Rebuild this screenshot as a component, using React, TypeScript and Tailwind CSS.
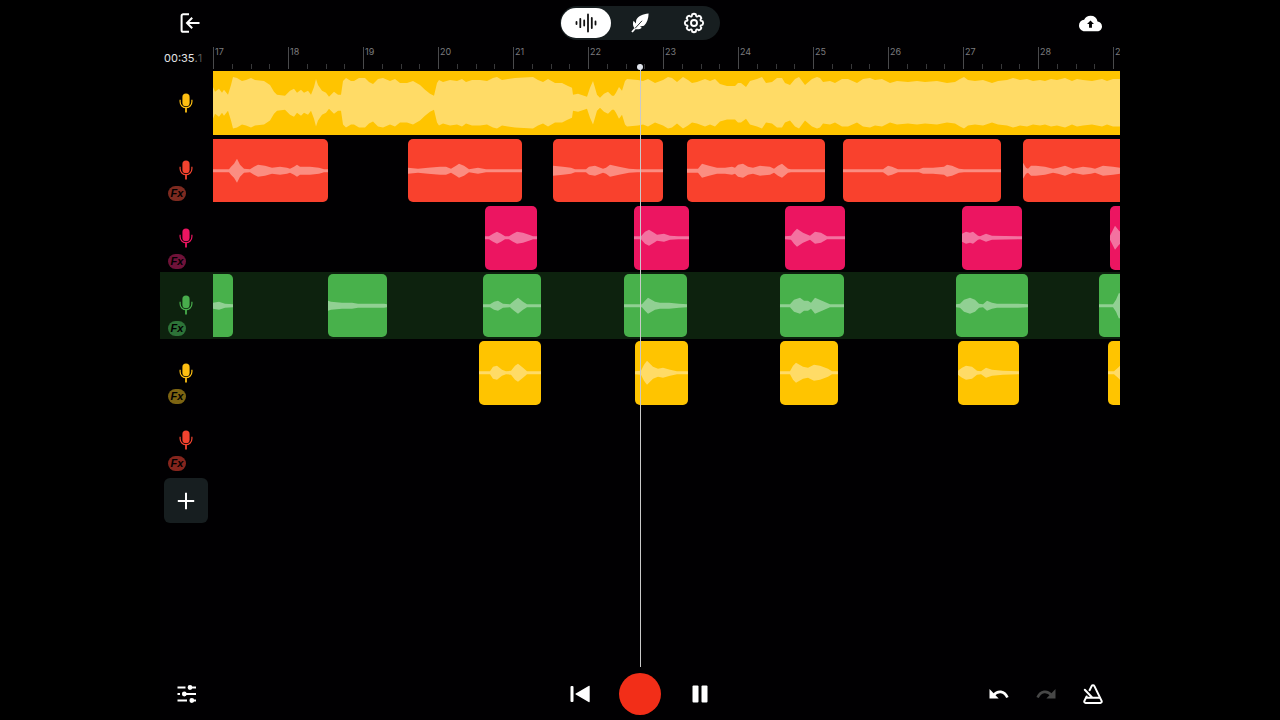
import { ReactNode } from "react";
import { clsx } from "clsx";

type Point = [number, number];

interface ClipData {
  start: number;
  end: number;
  wave: Point[];
}

interface TrackData {
  name: string;
  clip: string;
  mic: string;
  fx?: string;
  selected?: boolean;
  full?: boolean;
  clips: ClipData[];
}

const BARS = [17, 18, 19, 20, 21, 22, 23, 24, 25, 26, 27, 28, 29];

const MASTER_WAVE: Point[] = [
  [0, 16], [2, 11], [6, 14], [9, 10], [11, 13], [15, 8], [18, 18], [20, 26], [24, 25], [29, 22],
  [33, 23], [38, 25], [42, 23], [51, 22], [57, 18], [61, 11], [64, 8], [72, 7], [77, 12], [81, 14],
  [84, 10], [88, 13], [91, 10], [95, 12], [98, 8], [101, 16], [103, 24], [105, 18], [109, 12], [113, 10],
  [116, 6], [121, 11], [125, 8], [128, 8], [130, 22], [133, 25], [138, 22], [141, 22], [146, 25], [152, 25],
  [156, 21], [160, 19], [165, 24], [170, 25], [177, 22], [182, 24], [187, 20], [194, 20], [200, 22], [207, 18],
  [212, 13], [217, 9], [221, 7], [224, 20], [226, 23], [230, 21], [237, 23], [244, 22], [249, 24], [253, 21],
  [259, 23], [267, 23], [274, 22], [280, 25], [284, 26], [289, 23], [295, 24], [302, 25], [320, 26], [325, 23],
  [330, 21], [335, 24], [342, 20], [349, 20], [355, 17], [359, 15], [360, 8], [365, 9], [374, 6], [377, 15],
  [380, 22], [382, 15], [384, 8], [387, 5], [391, 9], [395, 11], [399, 7], [401, 7], [403, 10], [406, 16],
  [409, 12], [412, 22], [414, 24], [425, 23], [430, 22], [435, 24], [442, 20], [450, 23], [455, 26], [459, 25],
  [464, 21], [470, 26], [475, 23], [479, 20], [484, 21], [492, 24], [497, 22], [502, 24], [507, 19], [514, 17],
  [522, 17], [525, 20], [528, 20], [533, 16], [537, 22], [544, 24], [549, 26], [553, 20], [559, 21], [564, 25],
  [569, 25], [572, 20], [577, 18], [582, 24], [586, 26], [592, 18], [599, 24], [604, 26], [607, 25], [610, 21],
  [617, 22], [622, 20], [629, 24], [635, 24], [644, 20], [650, 24], [657, 25], [662, 23], [669, 24], [677, 20],
  [684, 22], [695, 21], [704, 22], [712, 21], [724, 22], [734, 20], [742, 21], [747, 24], [751, 26], [755, 23],
  [762, 22], [770, 23], [779, 20], [785, 22], [794, 23], [800, 25], [807, 23], [814, 24], [820, 22], [827, 23],
  [832, 22], [838, 24], [844, 23], [852, 25], [859, 22], [864, 24], [870, 23], [879, 22], [884, 23], [889, 24],
  [894, 22], [900, 24], [907, 24], [914, 24],
];

const TRACKS: TrackData[] = [
  {
    name: "Track 1",
    clip: "bg-[#ffc400]",
    mic: "text-[#fdbe12]",
    full: true,
    clips: [{ start: 0, end: 914, wave: MASTER_WAVE }],
  },
  {
    name: "Track 2",
    clip: "bg-[#f9412d]",
    mic: "text-[#f4432f]",
    fx: "bg-[#7d2a20]",
    clips: [
      { start: 0, end: 115, wave: [[0, 1], [16, 1], [18, 4], [21, 7], [24, 12], [27, 6], [31, 2], [37, 1], [41, 4], [45, 6], [52, 5], [59, 3], [67, 4], [74, 3], [77, 2], [81, 4], [84, 6], [87, 4], [97, 4], [106, 3], [111, 1], [115, 1]] },
      { start: 195, end: 309, wave: [[0, 3], [10, 2], [20, 3], [32, 4], [38, 4], [43, 2], [48, 5], [51, 7], [56, 5], [61, 1], [70, 3], [78, 1], [114, 1]] },
      { start: 340, end: 450, wave: [[0, 5], [10, 4], [18, 3], [22, 1], [33, 1], [36, 4], [42, 5], [50, 2], [53, 3], [57, 6], [66, 4], [76, 2], [84, 1], [110, 1]] },
      { start: 474, end: 612, wave: [[0, 2], [11, 2], [15, 7], [22, 5], [30, 3], [38, 3], [45, 4], [48, 3], [51, 6], [56, 7], [61, 4], [66, 3], [73, 5], [83, 4], [87, 2], [91, 5], [95, 7], [101, 2], [104, 1], [138, 1]] },
      { start: 630, end: 788, wave: [[0, 1], [40, 1], [45, 5], [49, 4], [55, 1], [76, 1], [80, 3], [90, 3], [101, 4], [104, 6], [109, 5], [116, 2], [121, 1], [158, 1]] },
      { start: 810, end: 930, wave: [[0, 8], [3, 3], [5, 2], [8, 5], [13, 5], [22, 4], [30, 2], [35, 3], [42, 5], [50, 2], [60, 4], [68, 3], [72, 2], [80, 5], [90, 4], [97, 3], [120, 2]] },
    ],
  },
  {
    name: "Track 3",
    clip: "bg-[#ec1561]",
    mic: "text-[#ec1561]",
    fx: "bg-[#6f1239]",
    clips: [
      { start: 272, end: 324, wave: [[0, 1], [4, 1], [8, 4], [12, 6], [16, 4], [20, 1], [24, 1], [28, 4], [32, 6], [38, 5], [44, 3], [48, 1], [52, 1]] },
      { start: 421, end: 476, wave: [[0, 1], [7, 1], [11, 6], [15, 8], [20, 5], [23, 3], [30, 4], [36, 2], [44, 1], [55, 1]] },
      { start: 572, end: 632, wave: [[0, 1], [6, 2], [9, 6], [12, 9], [18, 5], [25, 2], [30, 6], [36, 5], [42, 1], [60, 1]] },
      { start: 749, end: 809, wave: [[0, 4], [4, 6], [8, 5], [11, 6], [16, 2], [18, 1], [24, 4], [30, 2], [60, 1]] },
      { start: 897, end: 950, wave: [[0, 2], [3, 8], [5, 12], [9, 7], [14, 3], [20, 1], [53, 1]] },
    ],
  },
  {
    name: "Track 4",
    clip: "bg-[#48b14b]",
    mic: "text-[#48ad4c]",
    fx: "bg-[#2d7338]",
    selected: true,
    clips: [
      { start: 0, end: 20, wave: [[0, 3], [6, 4], [12, 2], [20, 1]] },
      { start: 115, end: 174, wave: [[0, 5], [3, 4], [14, 3], [24, 3], [30, 2], [56, 2], [59, 1]] },
      { start: 270, end: 328, wave: [[0, 1], [7, 1], [11, 4], [15, 5], [20, 2], [27, 1], [31, 5], [35, 8], [40, 4], [44, 1], [58, 1]] },
      { start: 411, end: 474, wave: [[0, 1], [18, 1], [21, 5], [24, 8], [31, 4], [36, 3], [45, 3], [55, 2], [63, 1]] },
      { start: 567, end: 631, wave: [[0, 1], [10, 1], [14, 6], [20, 8], [24, 5], [28, 5], [31, 3], [35, 8], [42, 5], [50, 1], [64, 1]] },
      { start: 743, end: 815, wave: [[0, 1], [4, 2], [8, 6], [14, 8], [19, 6], [23, 2], [27, 1], [31, 5], [36, 3], [41, 2], [62, 2], [72, 1]] },
      { start: 886, end: 950, wave: [[0, 1], [14, 1], [17, 6], [20, 13], [26, 8], [32, 2], [64, 1]] },
    ],
  },
  {
    name: "Track 5",
    clip: "bg-[#ffc400]",
    mic: "text-[#fdbe12]",
    fx: "bg-[#7d6412]",
    clips: [
      { start: 266, end: 328, wave: [[0, 1], [11, 1], [14, 6], [18, 7], [23, 3], [27, 1], [32, 2], [36, 7], [39, 9], [44, 5], [48, 1], [62, 1]] },
      { start: 422, end: 475, wave: [[0, 1], [6, 2], [9, 8], [12, 12], [18, 6], [23, 4], [28, 5], [35, 3], [42, 1], [53, 1]] },
      { start: 567, end: 625, wave: [[0, 1], [10, 1], [13, 7], [16, 10], [23, 6], [28, 5], [34, 8], [40, 7], [48, 4], [52, 1], [58, 1]] },
      { start: 745, end: 806, wave: [[0, 2], [4, 5], [8, 7], [14, 6], [19, 2], [23, 1], [28, 5], [34, 3], [45, 2], [61, 1]] },
      { start: 895, end: 950, wave: [[0, 1], [6, 1], [10, 5], [13, 8], [20, 5], [30, 1], [55, 1]] },
    ],
  },
  {
    name: "Track 6",
    clip: "bg-[#f9412d]",
    mic: "text-[#f4432f]",
    fx: "bg-[#85251d]",
    clips: [],
  },
];

// Mirrors the amplitude list around the middle of the clip
function wavePath(wave: Point[]) {
  const thick = (amp: number) => Math.max(amp, 1.4);
  const top = wave.map(([x, amp]) => `${x} ${32 - thick(amp)}`);
  const bottom = [...wave].reverse().map(([x, amp]) => `${x} ${32 + thick(amp)}`);
  return `M${[...top, ...bottom].join("L")}Z`;
}

function gearPath() {
  const at = (deg: number, r: number) => {
    const a = (deg * Math.PI) / 180;
    return `${(11 + r * Math.cos(a)).toFixed(2)} ${(11 + r * Math.sin(a)).toFixed(2)}`;
  };
  let d = `M${at(-12, 8.8)}`;
  for (let i = 0; i < 8; i++) {
    const a = i * 45;
    d += `Q${at(a, 9.8)} ${at(a + 12, 8.8)}Q${at(a + 22.5, 5.4)} ${at(a + 33, 8.8)}`;
  }
  return d + "Z";
}

function IconButton({ label, className, children }: { label: string; className?: string; children: ReactNode }) {
  return (
    <button type="button" aria-label={label} className={clsx("flex h-10 w-10 items-center justify-center", className)}>
      {children}
    </button>
  );
}

function MicIcon() {
  return (
    <svg width="14" height="20" viewBox="0 0 14 20" fill="none">
      <rect x="3.4" y="0.5" width="7.2" height="12.8" rx="3.6" fill="currentColor" />
      <path d="M1.1 6.8v2a5.9 5.9 0 0 0 11.8 0v-2" stroke="currentColor" strokeWidth="1.2" />
      <path d="M7 14.6v5" stroke="currentColor" strokeWidth="1.8" />
    </svg>
  );
}

function Clip({ clip, offset, track }: { clip: ClipData; offset: number; track: TrackData }) {
  const width = clip.end - clip.start;
  return (
    <div
      className={clsx(
        "h-full shrink-0 overflow-hidden",
        track.clip,
        !track.full && (clip.start === 0 ? "rounded-r-[5px]" : "rounded-[5px]")
      )}
      style={{ width, marginLeft: offset }}
    >
      <svg className="h-full w-full" viewBox={`0 0 ${width} 64`} preserveAspectRatio="none">
        <path d={wavePath(clip.wave)} fill="#fff" fillOpacity="0.4" strokeLinejoin="round" />
      </svg>
    </div>
  );
}

function Track({ track }: { track: TrackData }) {
  return (
    <li className={clsx("flex min-h-0 flex-1", track.selected && "bg-[#0d220e]")}>
      <div className={clsx("relative flex w-[53px] shrink-0 items-center justify-center pr-px", track.mic)}>
        <button type="button" aria-label={track.name}>
          <MicIcon />
        </button>
        {track.fx && (
          <span
            className={clsx(
              "absolute bottom-[3px] left-2 flex h-[15px] w-[18px] items-center justify-center rounded-full font-['Liberation_Sans'] text-[11px] font-bold italic leading-none text-black",
              track.fx
            )}
          >
            Fx
          </span>
        )}
      </div>
      <div className="flex min-w-0 flex-1 overflow-hidden py-0.5">
        {track.clips.map((clip, i) => (
          <Clip
            key={clip.start}
            clip={clip}
            track={track}
            offset={clip.start - (i > 0 ? track.clips[i - 1].end : 0)}
          />
        ))}
      </div>
    </li>
  );
}

function Header() {
  return (
    <header className="grid h-[46px] grid-cols-[1fr_auto_1fr] items-center px-2.5">
      <IconButton label="Exit">
        <svg width="20" height="20" viewBox="0 0 20 20" fill="none" stroke="#fff" strokeWidth="2">
          <path d="M9 1.2H3.2a1.6 1.6 0 0 0-1.6 1.6v14.4a1.6 1.6 0 0 0 1.6 1.6H9" />
          <path d="M19.5 10H7.2M12.2 4.8 7 10l5.2 5.2" />
        </svg>
      </IconButton>
      <nav className="flex h-[34px] items-center gap-1 rounded-full bg-[#171e20] px-px">
        <button type="button" aria-label="Tracks" className="flex h-[30px] w-[50px] items-center justify-center rounded-full bg-white">
          <svg width="22" height="20" viewBox="0 0 22 20" stroke="#111" strokeWidth="1.8" strokeLinecap="round">
            <path d="M1.5 9v2M5.3 5.8v8.4M9.2 7.5v5M13 1.5v17M16.8 5v10M20.5 8.5v3" />
          </svg>
        </button>
        <button type="button" aria-label="Lyrics" className="flex h-[30px] w-[50px] items-center justify-center rounded-full">
          <svg width="18" height="20" viewBox="0 0 18 20">
            <path d="M17.6.6C11.6 1 7.4 3.2 5.2 7L4.9 10.4 2.6 7.8C1.6 10.2 1.8 12.6 3 14.4L4.4 16c2 .6 4.6.4 6.4-1.2L9 13.4l4-.6c3.2-3 4.5-7.2 4.6-12.2Z" fill="#fff" />
            <path d="M1 19 5.4 14" stroke="#fff" strokeWidth="1.8" />
            <path d="M4 15.4 11 7.8" stroke="#171e20" strokeWidth="0.9" />
          </svg>
        </button>
        <button type="button" aria-label="Settings" className="flex h-[30px] w-[50px] items-center justify-center rounded-full">
          <svg width="22" height="22" viewBox="0 0 22 22" fill="none" stroke="#fff" strokeWidth="1.9" strokeLinejoin="round">
            <path d={gearPath()} />
            <circle cx="11" cy="11" r="3" />
          </svg>
        </button>
      </nav>
      <IconButton label="Save to cloud" className="justify-self-end">
        <svg width="23" height="23" viewBox="0 0 24 24" fill="#fff" fillRule="evenodd">
          <path d="M19.35 10.04A7.49 7.49 0 0 0 12 4C9.11 4 6.6 5.64 5.35 8.04A5.994 5.994 0 0 0 0 14c0 3.31 2.69 6 6 6h13c2.76 0 5-2.24 5-5 0-2.64-2.05-4.78-4.65-4.96ZM12 8.8l-3.6 3.8h2.1v3.9h3v-3.9h2.1Z" />
        </svg>
      </IconButton>
    </header>
  );
}

function Ruler() {
  return (
    <div className="flex h-[23px]">
      <div className="flex w-[53px] shrink-0 items-center overflow-hidden pl-1 pt-0.5 text-[11px] leading-none text-[#e4e4e4]">
        00:35
        <span className="text-[#8a8a8a]">.</span>
        <span className="text-[#555]">1</span>
      </div>
      <div className="flex min-w-0 flex-1 items-end overflow-hidden">
        {BARS.map((bar) => (
          <div key={bar} className="flex h-[22px] w-[75px] shrink-0 flex-col justify-between border-l border-[#4a4a4c]">
            <span className="pl-px text-[9px] leading-[9px] text-[#7c7c7e]">{bar}</span>
            <div className="flex h-[5px] justify-evenly">
              <i className="w-px bg-[#38383a]" />
              <i className="w-px bg-[#38383a]" />
              <i className="w-px bg-[#38383a]" />
            </div>
          </div>
        ))}
      </div>
    </div>
  );
}

function CurvedArrow({ className }: { className?: string }) {
  return (
    <svg className={className} width="20" height="12" viewBox="0 0 20 12" fill="none">
      <path d="M.5 1v9.6h9.2Z" fill="currentColor" />
      <path d="M4.5 7.2C8.6 2.2 15.6 2.6 18.4 9.6" stroke="currentColor" strokeWidth="2.6" />
    </svg>
  );
}

function Transport() {
  return (
    <footer className="grid h-[53px] grid-cols-[1fr_auto_1fr] items-center px-[7px]">
      <IconButton label="Mixer">
        <svg width="20" height="18" viewBox="0 0 20 18" fill="#fff" stroke="#fff" strokeWidth="2">
          <path d="M.5 2.5h8M12 2.5h7M.5 9H3M7 9h12M.5 15.5H10M14 15.5h5" />
          <circle cx="13" cy="2.5" r="1.4" />
          <circle cx="7.3" cy="9" r="1.4" />
          <circle cx="14.8" cy="15.5" r="1.4" />
        </svg>
      </IconButton>
      <div className="flex items-center gap-[19px]">
        <IconButton label="Back to start">
          <svg width="20" height="18" viewBox="0 0 20 18" fill="#fff">
            <rect x="0.5" y="1" width="3" height="16" rx="1" />
            <path d="M18.6.9a.7.7 0 0 1 1.1.6v15a.7.7 0 0 1-1.1.6L5.8 9.6a.7.7 0 0 1 0-1.2Z" />
          </svg>
        </IconButton>
        <button type="button" aria-label="Record" className="h-[42px] w-[42px] rounded-full bg-[#f22e18]" />
        <IconButton label="Pause">
          <svg width="16" height="18" viewBox="0 0 16 18" fill="#fff">
            <rect x="0.5" y="0.5" width="6" height="17" rx="1" />
            <rect x="9.5" y="0.5" width="6" height="17" rx="1" />
          </svg>
        </IconButton>
      </div>
      <div className="flex gap-[7px] justify-self-end">
        <IconButton label="Undo" className="text-white">
          <CurvedArrow />
        </IconButton>
        <IconButton label="Redo" className="text-[#474747]">
          <CurvedArrow className="-scale-x-100" />
        </IconButton>
        <IconButton label="Metronome">
          <svg width="20" height="20" viewBox="0 0 20 20" fill="none" stroke="#fff" strokeWidth="2" strokeLinecap="round" strokeLinejoin="round">
            <path d="M6.6 6.2 8.6 2.1c.6-1.2 2.2-1.2 2.8 0l7.2 14.8c.4 1-.2 2-1.2 2H2.6c-1 0-1.6-1-1.2-2l2.2-4.4" />
            <path d="M3.6 13.8h13M1.8 5.8l7.6 8" />
          </svg>
        </IconButton>
      </div>
    </footer>
  );
}

export default function App() {
  return (
    <div className="min-h-screen bg-black px-[12.5%] font-['Inter','Liberation_Sans',sans-serif]">
      <main className="relative flex min-h-screen flex-col bg-[#010002]">
        <Header />
        <Ruler />
        <ul className="flex h-[405px] flex-col">
          {TRACKS.map((track) => (
            <Track key={track.name} track={track} />
          ))}
        </ul>
        <button
          type="button"
          aria-label="Add track"
          className="ml-1 mt-1 flex h-[45px] w-11 items-center justify-center rounded-md bg-[#171e20]"
        >
          <svg width="18" height="18" viewBox="0 0 18 18" stroke="#fff" strokeWidth="2">
            <path d="M9 .8v16.4M.8 9h16.4" />
          </svg>
        </button>
        <div className="flex-1" />
        <Transport />
        <div className="pointer-events-none absolute bottom-[53px] left-1/2 top-16 w-px bg-[#c9c9c9]">
          <div className="-ml-[3px] h-1.5 w-1.5 rounded-full bg-[#dfe3ec]" />
        </div>
      </main>
    </div>
  );
}
